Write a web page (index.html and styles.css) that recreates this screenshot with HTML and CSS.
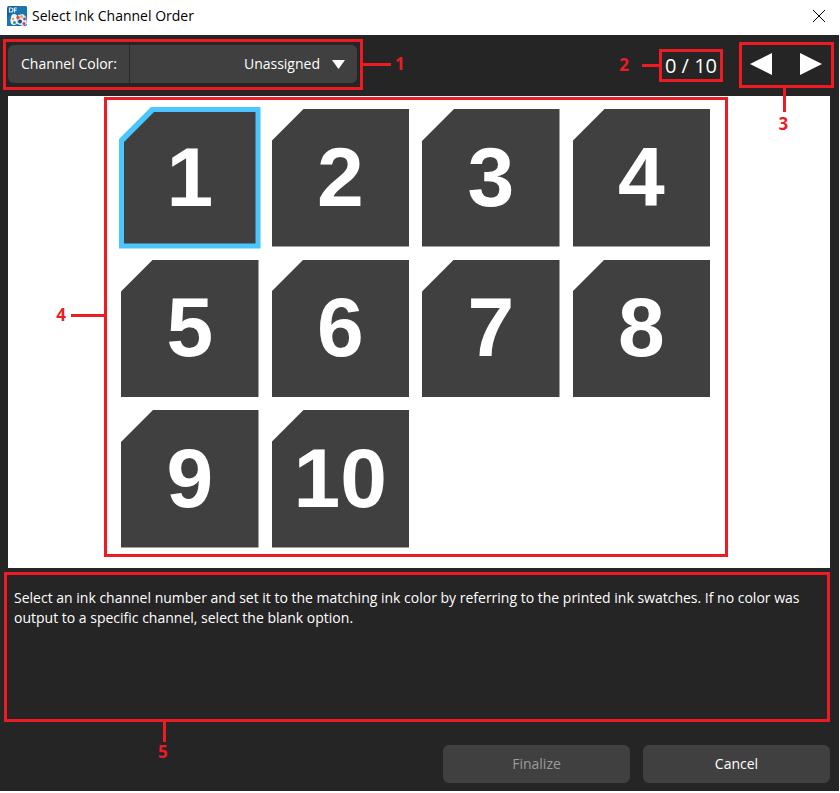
FILE: index.html
```html
<!DOCTYPE html>
<html lang="en">
<head>
<meta charset="utf-8">
<title>Select Ink Channel Order</title>
<link rel="stylesheet" href="styles.css">
</head>
<body>
<main class="window">
  <header class="titlebar">
    <svg class="app-icon" viewBox="0 0 20 20" aria-hidden="true">
      <rect width="20" height="20" rx="2" fill="#14619c"/>
      <path d="M0 20V12L12 0h6q2 0 2 2v9L10 20z" fill="#1b75ae"/>
      <path d="M2.500 2v4h1.500q2 0 2-2t-2-2zM7.500 6.500V2H10M7.500 4.200h2" fill="none" stroke="#d8ecf8" stroke-width="1.200"/>
      <path d="M7 8c3 0 4 3 3 5 1 3 0 6-3 6-4 0-4-5-3-7 0-2 1-4 3-4z" fill="#f5f7fa"/>
      <path d="M11 9l5-1 3 3 1 7-4 2-6-2z" fill="#e3edf5"/>
      <circle cx="6" cy="13" r="1.200" fill="#e8a04a"/>
      <circle cx="7.500" cy="16.500" r="1.500" fill="#2b9b62"/>
      <circle cx="11" cy="11.500" r="1.700" fill="#e3473b"/>
      <circle cx="14.500" cy="10.500" r="1.500" fill="#f0a33b"/>
      <circle cx="13" cy="15.500" r="2" fill="#174f88"/>
      <circle cx="17.500" cy="13" r="1.400" fill="#7d4fa1"/>
      <circle cx="17" cy="17.500" r="1.500" fill="#db4256"/>
    </svg>
    <h1 class="title">Select Ink Channel Order</h1>
    <button class="close" type="button" aria-label="Close">
      <svg viewBox="0 0 14 14"><path d="M1 1l12 12M13 1L1 13"/></svg>
    </button>
  </header>

  <section class="toolbar">
    <div class="field marked">
      <label class="field-label" for="channel">Channel Color:</label>
      <select class="field-select" id="channel"><option>Unassigned</option></select>
      <svg class="field-arrow" viewBox="0 0 13 9" aria-hidden="true"><path d="M0 0h13L6.500 9z"/></svg>
      <div class="callout callout-field"><span class="leader leader-right"></span><span class="tag tag-right">1</span></div>
    </div>
    <output class="counter marked">0 / 10<span class="callout callout-counter"><span class="leader leader-left leader-short"></span><span class="tag tag-left tag-near">2</span></span></output>
    <nav class="pager marked">
      <button class="page" type="button" aria-label="Previous channel"><svg viewBox="0 0 22 22"><path d="M22 0v22L0 11z"/></svg></button>
      <button class="page" type="button" aria-label="Next channel"><svg viewBox="0 0 22 22"><path d="M0 0v22l22-11z"/></svg></button>
      <div class="callout callout-pager"><span class="leader leader-down"></span><span class="tag tag-down">3</span></div>
    </nav>
  </section>

  <section class="panel">
    <div class="tiles marked">
      <button class="tile selected" type="button"><span>1</span></button>
      <button class="tile" type="button"><span>2</span></button>
      <button class="tile" type="button"><span>3</span></button>
      <button class="tile" type="button"><span>4</span></button>
      <button class="tile" type="button"><span>5</span></button>
      <button class="tile" type="button"><span>6</span></button>
      <button class="tile" type="button"><span>7</span></button>
      <button class="tile" type="button"><span>8</span></button>
      <button class="tile" type="button"><span>9</span></button>
      <button class="tile" type="button"><span>10</span></button>
      <div class="callout callout-tiles"><span class="leader leader-left leader-tiles"></span><span class="tag tag-left tag-tiles">4</span></div>
    </div>
  </section>

  <section class="message marked">
    <p>Select an ink channel number and set it to the matching ink color by referring to the printed ink swatches. If no color was output to a specific channel, select the blank option.</p>
    <div class="callout callout-message"><span class="leader leader-down leader-message"></span><span class="tag tag-down tag-message">5</span></div>
  </section>

  <footer class="actions">
    <button class="action" type="button" disabled>Finalize</button>
    <button class="action" type="button">Cancel</button>
  </footer>
</main>
</body>
</html>
```
FILE: styles.css
```css
* {
  box-sizing: border-box;
}

body {
  margin: 0;
  background: #fff;
  color: #fff;
  font-family: "Open Sans", "Noto Sans", sans-serif;
  font-size: 14px;
  line-height: 20px;
}

button,
select {
  margin: 0;
  padding: 0;
  border: 0;
  color: inherit;
  font: inherit;
}

svg {
  display: block;
}

.window {
  margin-right: 1px;
  background: #252525;
}

/* Title bar */
.titlebar {
  display: flex;
  align-items: center;
  gap: 5px;
  height: 35px;
  padding: 0 13px 3px 7px;
  background: #fff;
  color: #000;
}

.app-icon {
  width: 20px;
  height: 20px;
}

.title {
  flex: 1;
  margin: 0;
  font-size: 14px;
  font-weight: 400;
}

.close {
  background: none;
}

.close svg {
  width: 14px;
  height: 14px;
  fill: none;
  stroke: #000;
}

/* Toolbar */
.toolbar {
  display: flex;
  align-items: center;
  padding: 10px 17px 13px 8px;
}

.field {
  display: flex;
  flex: 0 1 349px;
  height: 38px;
  border-radius: 6px;
  background: #404040;
}

.field-label {
  flex: 0 0 122px;
  padding: 9px 0 9px 13px;
  border-right: 1px solid #2b2b2b;
  white-space: nowrap;
}

.field-select {
  flex: 1;
  min-width: 0;
  padding-right: 37px;
  border-radius: 0 6px 6px 0;
  background: #404040;
  appearance: none;
  text-align-last: right;
}

.field-arrow {
  position: absolute;
  top: 15px;
  right: 12px;
  width: 13px;
  height: 9px;
  fill: #fff;
  pointer-events: none;
}

.counter {
  margin-left: auto;
  padding-top: 4px;
  font-size: 20px;
  line-height: 28px;
  white-space: nowrap;
}

.pager {
  display: flex;
  gap: 28px;
  margin-left: 33px;
}

.page {
  background: none;
}

.page svg {
  width: 22px;
  height: 22px;
  fill: #fff;
}

/* Channel tiles */
.panel {
  margin: 0 9px 0 8px;
  padding: 13px 120px 20px 113px;
  background: #fff;
}

.tiles {
  display: grid;
  grid-template-columns: repeat(4, 1fr);
  gap: 13px;
}

.tile {
  position: relative;
  aspect-ratio: 1;
  padding-bottom: 2px;
  background: none;
  font-family: "Liberation Sans", Arial, sans-serif;
  font-size: 84px;
  font-weight: 700;
  line-height: 84px;
}

.tile::before,
.tile.selected::after {
  content: "";
  position: absolute;
  inset: 0;
  background: #404040;
  clip-path: polygon(32px 0, 100% 0, 100% 100%, 0 100%, 0 32px);
}

.tile.selected::before {
  inset: -2px;
  background: #4cc6ff;
}

.tile.selected::after {
  inset: 3px;
  clip-path: polygon(30px 0, 100% 0, 100% 100%, 0 100%, 0 30px);
}

.tile span {
  position: relative;
  z-index: 1;
}

/* Message and actions */
.message {
  min-height: 154px;
  padding: 20px 16px 20px 14px;
}

.message p {
  margin: 0;
}

.actions {
  display: flex;
  justify-content: flex-end;
  gap: 13px;
  padding: 23px 9px 8px;
}

.action {
  width: 187px;
  height: 38px;
  border-radius: 6px;
  background: #404040;
}

.action:disabled {
  color: #9b9b9b;
}

/* Numbered callouts laid over the dialog */
.marked {
  position: relative;
}

.callout {
  position: absolute;
  z-index: 2;
  border: 3px solid #ed1c24;
  pointer-events: none;
}

.callout-field {
  inset: -6px -6px -7px -5px;
}

.callout-counter {
  inset: 1px -6px -2px;
}

.callout-pager {
  inset: -11px -12px -13px -11px;
}

.callout-tiles {
  inset: -12px -18px -9px -17px;
}

.callout-message {
  inset: 4px 9px 0 4px;
}

.leader,
.tag {
  position: absolute;
}

.leader {
  background: #ed1c24;
}

.leader-left,
.leader-right {
  top: calc(50% - 2px);
  width: 33px;
  height: 3px;
}

.leader-right {
  left: calc(100% + 3px);
  width: 28px;
}

.leader-left {
  right: calc(100% + 3px);
}

.leader-short {
  width: 17px;
}

.leader-tiles {
  top: 214px;
}

.leader-down {
  top: calc(100% + 3px);
  left: calc(50% - 4px);
  width: 3px;
  height: 24px;
}

.leader-message {
  left: 156px;
  height: 20px;
}

.tag {
  color: #ed1c24;
  font-size: 17px;
  font-weight: 700;
  line-height: 24px;
}

.tag-left,
.tag-right {
  top: calc(50% - 13px);
}

.tag-right {
  left: calc(100% + 35px);
}

.tag-left {
  right: calc(100% + 41px);
}

.tag-near {
  right: calc(100% + 33px);
}

.tag-tiles {
  top: 203px;
}

.tag-down {
  top: calc(100% + 27px);
  left: calc(50% - 8px);
}

.tag-message {
  top: calc(100% + 21px);
  left: 151px;
}
```
